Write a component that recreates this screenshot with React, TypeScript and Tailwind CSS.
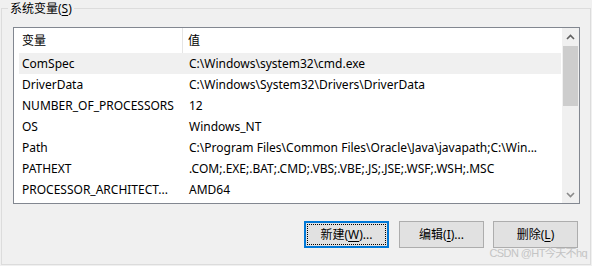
import React from "react";

const rows: [string, string][] = [
  ["ComSpec", "C:\\Windows\\system32\\cmd.exe"],
  ["DriverData", "C:\\Windows\\System32\\Drivers\\DriverData"],
  ["NUMBER_OF_PROCESSORS", "12"],
  ["OS", "Windows_NT"],
  ["Path", "C:\\Program Files\\Common Files\\Oracle\\Java\\javapath;C:\\Win..."],
  ["PATHEXT", ".COM;.EXE;.BAT;.CMD;.VBS;.VBE;.JS;.JSE;.WSF;.WSH;.MSC"],
  ["PROCESSOR_ARCHITECT...", "AMD64"],
];

const font = { fontFamily: '"Noto Sans", "Noto Sans CJK SC", sans-serif' };

function Chevron({ up, color }: { up: boolean; color: string }) {
  return (
    <svg width="9" height="6" viewBox="0 0 9 6">
      <path
        d={up ? "M1 5 L4.5 1.5 L8 5" : "M1 1 L4.5 4.5 L8 1"}
        fill="none"
        stroke={color}
        strokeWidth="1.6"
      />
    </svg>
  );
}

export default function App() {
  return (
    <div
      className="relative w-[592px] h-[266px] bg-[#f0f0f0] overflow-hidden text-[12px] text-black"
      style={font}
    >
      <div className="relative mt-[8px] ml-[1px] w-[590px] h-[257px] border border-[#dcdcdc]">
        <div className="absolute left-[6px] top-[-8px] px-[2px] bg-[#f0f0f0] leading-[16px]">
          系统变量(<span className="underline underline-offset-2">S</span>)
        </div>
        <div className="ml-[11px] mt-[18px] w-[567px] h-[177px] border border-[#828790] bg-white flex">
          <div className="w-[548px] flex flex-col">
            <div className="h-[25px] flex items-center relative w-[547px]">
              <div className="pl-[8px] w-[168px]">变量</div>
              <div className="w-[1px] h-[25px] bg-[#e5e5e5]"></div>
              <div className="pl-[5px]">值</div>
            </div>
            {rows.map(([k, v], i) => (
              <div
                key={k}
                className={
                  "ml-[5px] w-[542px] h-[21px] flex items-center whitespace-nowrap " +
                  (i === 0 ? "bg-[#f0f0f0]" : "")
                }
              >
                <div className="pl-[3px] w-[167px] overflow-hidden">{k}</div>
                <div className="pl-[3px]">{v}</div>
              </div>
            ))}
          </div>
          <div className="w-[17px] flex flex-col bg-[#f0f0f0]">
            <div className="h-[17px] flex items-center justify-center">
              <Chevron up color="#606060" />
            </div>
            <div className="mt-[1px] mx-[1px] h-[60px] bg-[#cdcdcd]"></div>
            <div className="flex-1"></div>
            <div className="h-[17px] flex items-center justify-center">
              <Chevron up={false} color="#8a8a8a" />
            </div>
          </div>
        </div>
        <div className="mt-[17px] ml-[302px] flex">
          <div className="w-[85px] h-[27px] bg-[#e1e1e1] border-2 border-[#0078d7] p-[1px]">
            <div className="w-full h-full border border-dotted border-black flex items-center justify-center">
              新建(<span className="underline underline-offset-2">W</span>)...
            </div>
          </div>
          <div className="ml-[10px] w-[85px] h-[27px] bg-[#e1e1e1] border border-[#adadad] flex items-center justify-center">
            编辑(<span className="underline underline-offset-2">I</span>)...
          </div>
          <div className="ml-[9px] w-[85px] h-[27px] bg-[#e1e1e1] border border-[#adadad] flex items-center justify-center">
            删除(<span className="underline underline-offset-2">L</span>)
          </div>
        </div>
      </div>
      <div
        className="absolute right-[5px] top-[247px] whitespace-nowrap text-[11px] leading-[13px] tracking-[-0.6px] text-[#c4c4c4]"
        style={{ fontFamily: '"Liberation Sans", "Noto Sans CJK SC", sans-serif' }}
      >
        CSDN @HT今天不hq
      </div>
    </div>
  );
}
